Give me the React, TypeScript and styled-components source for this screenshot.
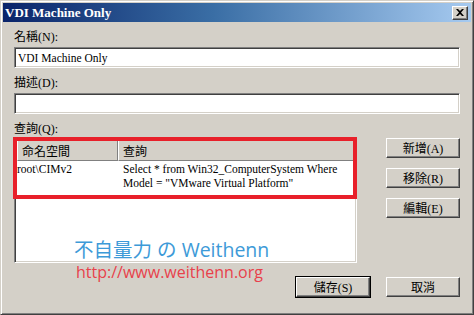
import React from 'react';
import styled, { createGlobalStyle } from 'styled-components';

const GlobalStyle = createGlobalStyle`
  html, body {
    margin: 0;
    padding: 0;
    background: #d4d0c8;
  }
`;

const SYS_FONT = `"Liberation Serif", "Noto Sans CJK TC", serif`;

const Window = styled.div`
  position: relative;
  box-sizing: border-box;
  width: 474px;
  height: 315px;
  display: flex;
  flex-direction: column;
  background: #d4d0c8;
  border: 1px solid;
  border-color: #d4d0c8 #404040 #404040 #d4d0c8;
  box-shadow: inset 1px 1px #ffffff, inset -1px -1px #808080;
  padding: 2px;
  font-family: ${SYS_FONT};
  font-size: 12px;
  color: #000;
  overflow: hidden;
`;

const TitleBar = styled.div`
  height: 19px;
  display: flex;
  align-items: center;
  padding: 0 3px 0 2px;
  background: linear-gradient(to right, #0a246a 0%, #3a6ea5 45%, #a6caf0 100%);
`;

const TitleText = styled.div`
  color: #fff;
  font-weight: bold;
  font-size: 13px;
  font-family: "Liberation Serif", serif;
`;

const CloseButton = styled.div`
  margin-left: auto;
  box-sizing: border-box;
  width: 16px;
  height: 14px;
  background: #d4d0c8;
  border: 1px solid;
  border-color: #ffffff #404040 #404040 #ffffff;
  box-shadow: inset -1px -1px #808080;
  display: flex;
  align-items: center;
  justify-content: center;
`;

const Body = styled.div`
  position: relative;
  flex: 1;
  display: flex;
  flex-direction: column;
  padding: 8px 11px 0 11px;
`;

const Label = styled.div<{ $gap: number }>`
  height: 14px;
  line-height: 14px;
  margin-bottom: ${p => p.$gap}px;
`;

const Sunken = styled.div`
  box-sizing: border-box;
  background: #fff;
  border: 1px solid;
  border-color: #808080 #ffffff #ffffff #808080;
  box-shadow: inset 1px 1px #404040, inset -1px -1px #d4d0c8;
`;

const TextBox = styled(Sunken)`
  height: 21px;
  margin-bottom: 8px;
  padding: 3px 4px 0 3px;
  line-height: 15px;
  font-size: 11.5px;
`;

const MainRow = styled.div`
  display: flex;
  gap: 29px;
`;

const ListView = styled(Sunken)`
  flex: 1;
  height: 126px;
  padding: 2px;
`;

const HeaderRow = styled.div`
  display: flex;
  height: 21px;
`;

const HeaderCell = styled.div<{ $width?: number }>`
  box-sizing: border-box;
  ${p => (p.$width ? `width: ${p.$width}px;` : 'flex: 1;')}
  height: 21px;
  line-height: 19px;
  padding-left: 4px;
  background: #d4d0c8;
  border: 1px solid;
  border-color: #ffffff #808080 #808080 #ffffff;
  font-family: "Noto Sans CJK TC", sans-serif;
  font-size: 12px;
`;

const DataRow = styled.div`
  display: flex;
  padding-top: 1px;
`;

const DataCell = styled.div<{ $width?: number; $pad: number }>`
  ${p => (p.$width ? `width: ${p.$width}px;` : 'flex: 1;')}
  padding-left: ${p => p.$pad}px;
  line-height: 14px;
  font-size: 11.5px;
  white-space: nowrap;
`;

const ButtonColumn = styled.div`
  display: flex;
  flex-direction: column;
  gap: 10px;
  padding-top: 1px;
`;

const Button = styled.div<{ $default?: boolean }>`
  box-sizing: border-box;
  width: 74px;
  height: 20px;
  display: flex;
  align-items: center;
  justify-content: center;
  background: #d4d0c8;
  border: 1px solid;
  border-color: #ffffff #404040 #404040 #ffffff;
  box-shadow: inset -1px -1px #808080;
  outline: ${p => (p.$default ? '1px solid #000' : 'none')};
  font-size: 12px;
`;

const Footer = styled.div`
  display: flex;
  justify-content: flex-end;
  gap: 16px;
  margin-top: 14px;
`;

const Highlight = styled.div`
  position: absolute;
  left: 10px;
  top: 115px;
  width: 344px;
  height: 62px;
  box-sizing: border-box;
  border: 4px solid #e8202a;
  pointer-events: none;
`;

const Watermark = styled.div`
  position: absolute;
  left: 71px;
  top: 216px;
  display: flex;
  flex-direction: column;
  font-family: "Open Sans", "Noto Sans CJK TC", sans-serif;
  pointer-events: none;
`;

const WatermarkTitle = styled.div`
  color: #3d9ad8;
  font-size: 19.5px;
  line-height: 24px;
`;

const WatermarkUrl = styled.div`
  color: #e8414b;
  font-size: 16px;
  line-height: 20px;
  margin-left: 2px;
`;

const App: React.FC = () => {
  return (
    <>
      <GlobalStyle />
      <Window>
        <TitleBar>
          <TitleText>VDI Machine Only</TitleText>
          <CloseButton>
            <svg width="8" height="7" viewBox="0 0 8 7">
              <path d="M0 0 L2 0 L4 2 L6 0 L8 0 L5 3.5 L8 7 L6 7 L4 5 L2 7 L0 7 L3 3.5 Z" fill="#000" />
            </svg>
          </CloseButton>
        </TitleBar>
        <Body>
          <Label $gap={3}>名稱(N):</Label>
          <TextBox>VDI Machine Only</TextBox>
          <Label $gap={3}>描述(D):</Label>
          <TextBox />
          <Label $gap={1}>查詢(Q):</Label>
          <MainRow>
            <ListView>
              <HeaderRow>
                <HeaderCell $width={101}>命名空間</HeaderCell>
                <HeaderCell>查詢</HeaderCell>
              </HeaderRow>
              <DataRow>
                <DataCell $width={101} $pad={0}>root\CIMv2</DataCell>
                <DataCell $pad={5}>
                  Select * from Win32_ComputerSystem Where
                  <br />
                  Model = "VMware Virtual Platform"
                </DataCell>
              </DataRow>
            </ListView>
            <ButtonColumn>
              <Button>新增(A)</Button>
              <Button>移除(R)</Button>
              <Button>編輯(E)</Button>
            </ButtonColumn>
          </MainRow>
          <Footer>
            <Button $default>儲存(S)</Button>
            <Button>取消</Button>
          </Footer>
          <Highlight />
          <Watermark>
            <WatermarkTitle>不自量力 の Weithenn</WatermarkTitle>
            <WatermarkUrl>http://www.weithenn.org</WatermarkUrl>
          </Watermark>
        </Body>
      </Window>
    </>
  );
};

export default App;
